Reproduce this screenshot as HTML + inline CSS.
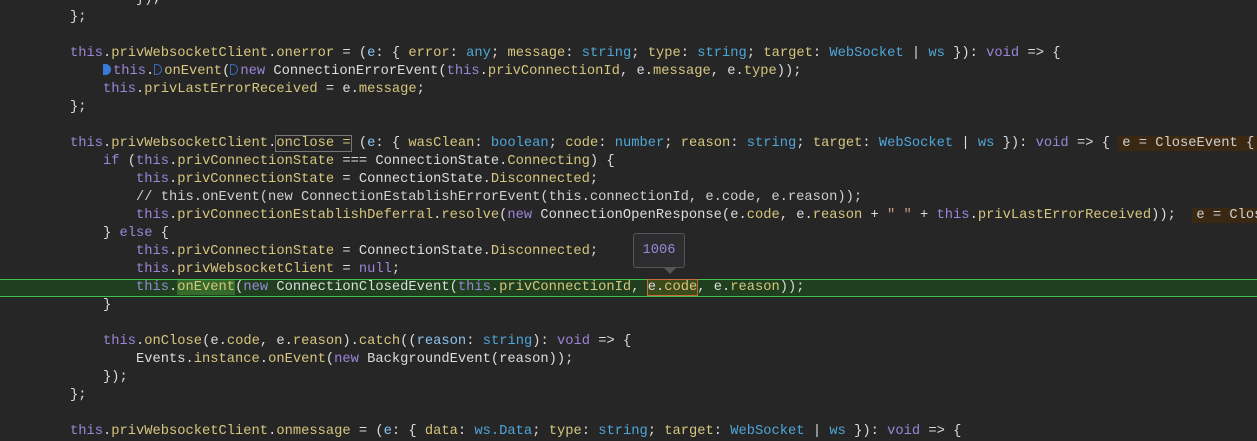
<!DOCTYPE html><html><head><style>
body{margin:0;width:1257px;height:432px;background:#262626;overflow:hidden;position:relative;font-family:"Liberation Mono",monospace;font-size:13.75px;color:#dcdcdc}
.l{position:absolute;left:70px;height:18px;line-height:18px;white-space:pre}
.k{color:#9a86d8}.m{color:#d6c67e}.t{color:#4ea6d8}.p{color:#8cc4ef}.s{color:#d69d85}
.hint{background:#3a2812;color:#d0d0d0;padding:0 4px}
.bp{display:inline-block;width:8px;height:11px;margin-right:2px;vertical-align:-1px;border-radius:0 6px 6px 0;box-sizing:border-box}
.bf{background:#3a7ad8}.bo{border:1.5px solid #3a6ab8}
</style></head><body>
<div style="position:absolute;left:0;top:279px;width:1257px;height:18px;background:#1f3f1e;border-top:1px solid #3fbf4f;border-bottom:1px solid #3fbf4f;box-sizing:border-box"></div>
<div class="l" style="top:-9px">        });</div>
<div class="l" style="top:9px">};</div>
<div class="l" style="top:45px"><span class="k">this</span>.<span class="m">privWebsocketClient</span>.<span class="m">onerror</span> = (<span class="p">e</span>: { <span class="m">error</span>: <span class="t">any</span>; <span class="m">message</span>: <span class="t">string</span>; <span class="m">type</span>: <span class="t">string</span>; <span class="m">target</span>: <span class="t">WebSocket</span> | <span class="t">ws</span> }): <span class="k">void</span> =&gt; {</div>
<div class="l" style="top:63px">    <span class="bp bf"></span><span class="k">this</span>.<span class="bp bo"></span><span class="m">onEvent</span>(<span class="bp bo"></span><span class="k">new</span> ConnectionErrorEvent(<span class="k">this</span>.<span class="m">privConnectionId</span>, e.<span class="m">message</span>, e.<span class="m">type</span>));</div>
<div class="l" style="top:81px">    <span class="k">this</span>.<span class="m">privLastErrorReceived</span> = e.<span class="m">message</span>;</div>
<div class="l" style="top:99px">};</div>
<div class="l" style="top:135px"><span class="k">this</span>.<span class="m">privWebsocketClient</span>.<span class="m" style="outline:1px solid #777;outline-offset:0">onclose =</span> (<span class="p">e</span>: { <span class="m">wasClean</span>: <span class="t">boolean</span>; <span class="m">code</span>: <span class="t">number</span>; <span class="m">reason</span>: <span class="t">string</span>; <span class="m">target</span>: <span class="t">WebSocket</span> | <span class="t">ws</span> }): <span class="k">void</span> =&gt; { <span class="hint">e = CloseEvent {</span></div>
<div class="l" style="top:153px">    <span class="k">if</span> (<span class="k">this</span>.<span class="m">privConnectionState</span> === ConnectionState.<span class="m">Connecting</span>) {</div>
<div class="l" style="top:171px">        <span class="k">this</span>.<span class="m">privConnectionState</span> = ConnectionState.<span class="m">Disconnected</span>;</div>
<div class="l" style="top:189px;color:#cfcfcf">        // this.onEvent(new ConnectionEstablishErrorEvent(this.connectionId, e.code, e.reason));</div>
<div class="l" style="top:207px">        <span class="k">this</span>.<span class="m">privConnectionEstablishDeferral</span>.<span class="m">resolve</span>(<span class="k">new</span> ConnectionOpenResponse(e.<span class="m">code</span>, e.<span class="m">reason</span> + <span class="s">" "</span> + <span class="k">this</span>.<span class="m">privLastErrorReceived</span>));  <span class="hint">e = Clos</span></div>
<div class="l" style="top:225px">    } <span class="k">else</span> {</div>
<div class="l" style="top:243px">        <span class="k">this</span>.<span class="m">privConnectionState</span> = ConnectionState.<span class="m">Disconnected</span>;</div>
<div class="l" style="top:261px">        <span class="k">this</span>.<span class="m">privWebsocketClient</span> = <span class="k">null</span>;</div>
<div class="l" style="top:279px">        <span class="k">this</span>.<span class="m" style="background:#356a2a">onEvent</span>(<span class="k">new</span> ConnectionClosedEvent(<span class="k">this</span>.<span class="m">privConnectionId</span>, <span style="outline:1px solid #c86a3a;background:#3d4a1a">e.<span class="m">code</span></span>, e.<span class="m">reason</span>));</div>
<div class="l" style="top:297px">    }</div>
<div class="l" style="top:333px">    <span class="k">this</span>.<span class="m">onClose</span>(e.<span class="m">code</span>, e.<span class="m">reason</span>).<span class="m">catch</span>((<span class="p">reason</span>: <span class="t">string</span>): <span class="k">void</span> =&gt; {</div>
<div class="l" style="top:351px">        Events.<span class="m">instance</span>.<span class="m">onEvent</span>(<span class="k">new</span> BackgroundEvent(reason));</div>
<div class="l" style="top:369px">    });</div>
<div class="l" style="top:387px">};</div>
<div class="l" style="top:423px"><span class="k">this</span>.<span class="m">privWebsocketClient</span>.<span class="m">onmessage</span> = (<span class="p">e</span>: { <span class="m">data</span>: <span class="t">ws.Data</span>; <span class="m">type</span>: <span class="t">string</span>; <span class="m">target</span>: <span class="t">WebSocket</span> | <span class="t">ws</span> }): <span class="k">void</span> =&gt; {</div>
<div style="position:absolute;left:633px;top:233px;width:52px;height:35px;box-sizing:border-box;background:#2d2d30;border:1px solid #555;border-radius:3px;color:#9a86d8;text-align:center;line-height:33px">1006</div>
<div style="position:absolute;left:663px;top:267px;width:0;height:0;border-left:7px solid transparent;border-right:7px solid transparent;border-top:7px solid #555"></div>
</body></html>
